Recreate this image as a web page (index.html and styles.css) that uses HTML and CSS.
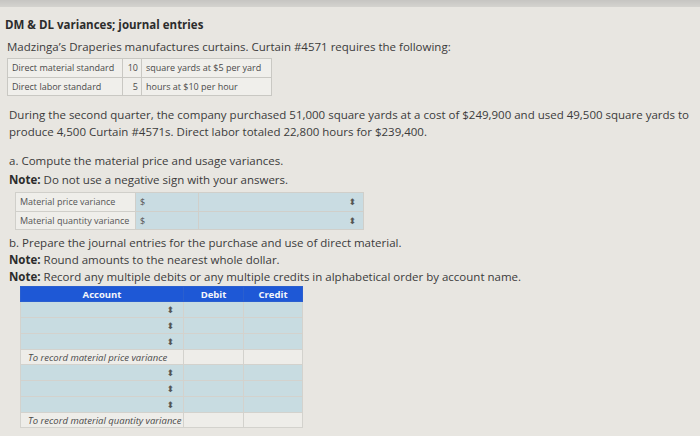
FILE: index.html
```html
<!DOCTYPE html>
<html>
<head>
<meta charset="utf-8">
<link rel="stylesheet" href="styles.css">
</head>
<body>
<div class="topband"></div>
<div class="page">
  <div class="title">DM &amp; DL variances; journal entries</div>
  <p class="line intro">Madzinga’s Draperies manufactures curtains. Curtain #4571 requires the following:</p>
  <table class="std">
    <tr><td class="c1">Direct material standard</td><td class="c2">10</td><td class="c3">square yards at $5 per yard</td></tr>
    <tr><td class="c1">Direct labor standard</td><td class="c2">5</td><td class="c3">hours at $10 per hour</td></tr>
  </table>
  <p class="para">During the second quarter, the company purchased 51,000 square yards at a cost of $249,900 and used 49,500 square yards to produce 4,500 Curtain #4571s. Direct labor totaled 22,800 hours for $239,400.</p>
  <p class="line qa">a. Compute the material price and usage variances.</p>
  <p class="line note n1"><b>Note:</b> Do not use a negative sign with your answers.</p>
  <table class="var">
    <tr><td class="lab">Material price variance</td><td class="dol">$</td><td class="inp"><span class="spin">&#x2B0D;</span></td></tr>
    <tr><td class="lab">Material quantity variance</td><td class="dol">$</td><td class="inp"><span class="spin">&#x2B0D;</span></td></tr>
  </table>
  <p class="line qb">b. Prepare the journal entries for the purchase and use of direct material.</p>
  <p class="line note"><b>Note:</b> Round amounts to the nearest whole dollar.</p>
  <p class="line note"><b>Note:</b> Record any multiple debits or any multiple credits in alphabetical order by account name.</p>
  <table class="jr">
    <tr class="hd"><th class="acc">Account</th><th class="deb">Debit</th><th class="cre">Credit</th></tr>
    <tr class="in"><td class="acc"><span class="spin">&#x2B0D;</span></td><td></td><td></td></tr>
    <tr class="in"><td class="acc"><span class="spin">&#x2B0D;</span></td><td></td><td></td></tr>
    <tr class="in"><td class="acc"><span class="spin">&#x2B0D;</span></td><td></td><td></td></tr>
    <tr class="memo"><td class="acc">To record material price variance</td><td></td><td></td></tr>
    <tr class="in"><td class="acc"><span class="spin">&#x2B0D;</span></td><td></td><td></td></tr>
    <tr class="in"><td class="acc"><span class="spin">&#x2B0D;</span></td><td></td><td></td></tr>
    <tr class="in"><td class="acc"><span class="spin">&#x2B0D;</span></td><td></td><td></td></tr>
    <tr class="memo"><td class="acc">To record material quantity variance</td><td></td><td></td></tr>
  </table>
</div>
</body>
</html>
```

FILE: styles.css
```css
html, body {
  margin: 0;
  padding: 0;
  background: #e8e6e1;
  width: 700px;
  height: 436px;
  overflow: hidden;
}
body {
  font-family: "Open Sans", "DejaVu Sans", sans-serif;
  color: #3b3b3b;
}
.topband {
  height: 7px;
  background: linear-gradient(#c6c5c2, #d4d3cf);
}
.page {
  padding: 0 0 0 9px;
}
.title {
  font-weight: 700;
  font-size: 11.5px;
  color: #2c2c2c;
  margin: 10px 0 0 -4px;
  line-height: 16px;
}
.line, .para {
  margin: 0;
  font-size: 11.5px;
  line-height: 17px;
  white-space: nowrap;
}
.para { white-space: normal; }
.intro {
  margin-top: 5px;
  margin-left: -2px;
}
table { table-layout: fixed; white-space: nowrap; }
.std {
  border-collapse: collapse;
  margin: 3px 0 0 -2px;
  font-size: 9px;
  background: #f0efeb;
}
.std td {
  border: 1px solid #c9c8c3;
  height: 18.5px;
  padding: 0 4px;
  color: #4a4a4a;
  box-sizing: border-box;
}
.std .c1 { width: 115px; }
.std .c2 { width: 19px; text-align: right; padding: 0 3px 0 0; }
.std .c3 { width: 130px; }
.para {
  margin-top: 10px;
  width: 690px;
}
.qa { margin-top: 12px; line-height: 18px; }
.n1 { line-height: 20px; }
.note b { font-weight: 700; color: #2c2c2c; }
.var {
  border-collapse: collapse;
  margin: 2px 0 0 6px;
  font-size: 9px;
}
.var td {
  border: 1px solid #d0cfca;
  height: 18.5px;
  padding: 0 4px;
  color: #555;
  box-sizing: border-box;
}
.var .lab { width: 120px; background: #efeeea; }
.var .dol { width: 63px; background: #c9dce2; }
.var .inp { width: 165px; background: #c9dce2; text-align: right; padding-right: 7px; }
.spin {
  font-size: 9px;
  color: #555;
}
.qb { margin-top: 4px; }
.jr {
  border-collapse: collapse;
  margin: 1px 0 0 11px;
  font-size: 9.5px;
}
.jr th {
  background: #1e58d6;
  color: #f4f6fb;
  font-weight: 700;
  height: 15px;
  padding: 0;
  border: 1px solid #2a5fcf;
  box-sizing: border-box;
}
.jr .hd .acc { width: 163px; }
.jr .hd .deb { width: 60px; }
.jr .hd .cre { width: 59px; }
.jr td {
  border: 1px solid #d3d2cd;
  height: 16px;
  padding: 0;
  box-sizing: border-box;
}
.jr .in td { background: #c8dce1; }
.jr .in .acc { text-align: right; padding-right: 9px; }
.jr .memo td { background: #eeede9; height: 15px; }
.jr .memo .acc {
  font-style: italic;
  color: #4a4a4a;
  padding-left: 7px;
  text-align: left;
}
```
